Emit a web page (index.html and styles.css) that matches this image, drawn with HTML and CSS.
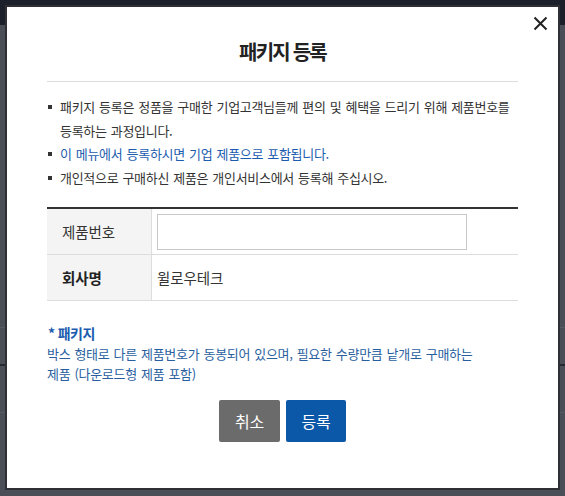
FILE: index.html
```html
<!DOCTYPE html>
<html lang="ko">
<head>
<meta charset="utf-8">
<title>패키지 등록</title>
<link rel="stylesheet" href="styles.css">
</head>
<body>
<div class="page">
  <div class="page-top"></div>
  <div class="page-body">
    <div class="rule rule-a"></div>
    <div class="rule rule-b"></div>
    <div class="rule rule-c"></div>
  </div>
</div>

<div class="modal">
  <button class="close" type="button" aria-label="닫기">
    <svg width="15" height="15" viewBox="0 0 15 15"><path d="M1.5 1.5 L13.5 13.5 M13.5 1.5 L1.5 13.5" stroke="#222" stroke-width="2" fill="none"/></svg>
  </button>
  <div class="modal-inner">
    <h2 class="title">패키지 등록</h2>
    <ul class="notes">
      <li>패키지 등록은 정품을 구매한 기업고객님들께 편의 및 혜택을 드리기 위해 제품번호를 등록하는 과정입니다.</li>
      <li class="blue">이 메뉴에서 등록하시면 기업 제품으로 포함됩니다.</li>
      <li>개인적으로 구매하신 제품은 개인서비스에서 등록해 주십시오.</li>
    </ul>
    <div class="form">
      <div class="label row1">제품번호</div>
      <div class="value row1"><input class="field" type="text"></div>
      <div class="label row2 strong">회사명</div>
      <div class="value row2">윌로우테크</div>
    </div>
    <div class="info">
      <p class="info-title">* 패키지</p>
      <p class="info-desc">박스 형태로 다른 제품번호가 동봉되어 있으며, 필요한 수량만큼 낱개로 구매하는 제품 (다운로드형 제품 포함)</p>
    </div>
    <div class="actions">
      <button class="btn btn-cancel" type="button">취소</button>
      <button class="btn btn-ok" type="button">등록</button>
    </div>
  </div>
</div>
</body>
</html>
```

FILE: styles.css
```css
html, body {
  margin: 0;
  padding: 0;
  height: 100%;
}
body {
  background: #4a4e57;
  font-family: "Noto Sans CJK KR", "Noto Sans", sans-serif;
  color: #333;
  overflow: hidden;
  word-break: keep-all;
}
.page {
  display: flex;
  flex-direction: column;
  height: 100%;
}
.page-top {
  height: 25px;
  background: #1c202b;
  flex: none;
}
.page-body {
  flex: 1;
  display: flex;
  flex-direction: column;
}
.rule { flex: none; }
.rule-a { margin-top: 302px; height: 1px; background: #565a62; }
.rule-b { margin-top: 36px; height: 2px; background: #25272c; }
.rule-c { margin-top: 46px; height: 1px; background: #565a62; }

.modal {
  position: fixed;
  left: 5px;
  top: 5px;
  width: 551px;
  height: 481px;
  background: #fff;
  border: 2px solid #2e3035;
}
.close {
  position: absolute;
  top: 9px;
  right: 10px;
  width: 15px;
  height: 15px;
  padding: 0;
  border: 0;
  background: none;
  display: block;
}
.close svg { display: block; }

.modal-inner {
  padding: 0 40px;
}
.title {
  margin: 0;
  padding: 30px 0 14px;
  line-height: 30px;
  font-size: 20px;
  font-weight: 700;
  letter-spacing: -1.8px;
  text-align: center;
  color: #222;
  border-bottom: 1px solid #dddddd;
}
.notes {
  list-style: none;
  margin: 13px 0 0;
  padding: 0 0 0 1px;
  font-size: 13px;
  letter-spacing: -0.3px;
  word-spacing: 0.8px;
  line-height: 23.5px;
}
.notes li {
  display: flex;
  gap: 8px;
}
.notes li::before {
  content: "";
  flex: none;
  width: 4px;
  height: 4px;
  background: #333;
  margin-top: 10px;
}
.notes li.blue { color: #1b5cae; }

.form {
  display: grid;
  grid-template-columns: 105px 1fr;
  grid-template-rows: 46px 46px;
  margin-top: 18px;
  border-top: 2px solid #333;
}
.label, .value {
  display: flex;
  align-items: center;
  border-bottom: 1px solid #dddddd;
  font-size: 14.5px;
  letter-spacing: -0.1px;
}
.label {
  padding-left: 15px;
  background: #f4f4f4;
  border-right: 1px solid #dddddd;
  color: #333;
}
.label.strong { font-weight: 700; color: #222; }
.value {
  padding-left: 5px;
  color: #333;
}
.value.row1 { padding-top: 1px; }
.field {
  display: block;
  box-sizing: border-box;
  width: 310px;
  height: 36px;
  border: 1px solid #c8c8c8;
  margin: 0;
  padding: 0 8px;
  font: inherit;
}

.info {
  margin-top: 21px;
  color: #2a5f9f;
}
.info p { margin: 0; }
.info-title {
  font-size: 14px;
  font-weight: 700;
  line-height: 22px;
  letter-spacing: -0.6px;
  color: #1b5cae;
  padding-left: 1px;
}
.info-desc {
  font-size: 13px;
  line-height: 20px;
  letter-spacing: -0.3px;
  word-spacing: 0.8px;
  padding-right: 30px;
}

.actions {
  display: flex;
  justify-content: center;
  gap: 6px;
  margin-top: 16px;
}
.btn {
  height: 42px;
  width: 60px;
  border: 0;
  border-radius: 2px;
  color: #fff;
  font-family: inherit;
  font-size: 16px;
  letter-spacing: -0.2px;
  padding: 0;
}
.btn-cancel { background: #6b6b6b; width: 61px; }
.btn-ok { background: #0b57a8; }
```
